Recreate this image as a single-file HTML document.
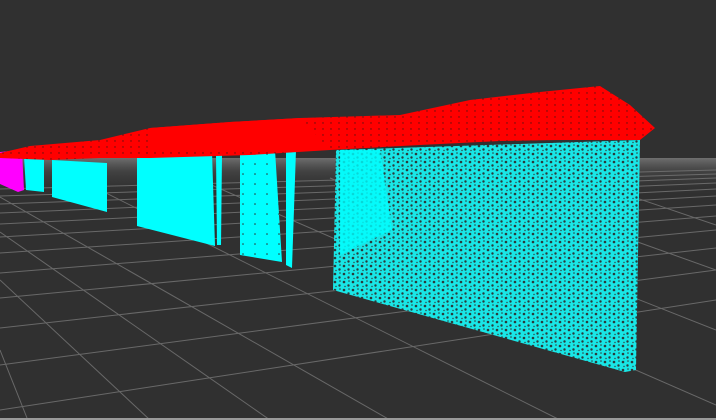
<!DOCTYPE html>
<html><head><style>html,body{margin:0;padding:0;background:#303030;overflow:hidden}svg{display:block}</style></head>
<body>
<svg width="716" height="420" viewBox="0 0 716 420" xmlns="http://www.w3.org/2000/svg">
<defs>
<linearGradient id="haze" x1="0" y1="0" x2="0" y2="1">
<stop offset="0" stop-color="#8a8a8a" stop-opacity="0.7"/>
<stop offset="0.35" stop-color="#606060" stop-opacity="0.35"/>
<stop offset="1" stop-color="#303030" stop-opacity="0"/>
</linearGradient>
<pattern id="spk" width="9" height="8" patternUnits="userSpaceOnUse">
<rect width="9" height="8" fill="#19e6e6"/>
<circle cx="2" cy="2" r="1.3" fill="#2b3a3a"/>
<circle cx="6.5" cy="5.5" r="1.2" fill="#2b3a3a"/>
<circle cx="7" cy="1" r="0.8" fill="#30403f"/>
<circle cx="3" cy="6.5" r="0.7" fill="#30403f"/>
</pattern>
<pattern id="spk2" width="12" height="10" patternUnits="userSpaceOnUse">
<rect width="12" height="10" fill="#00ffff"/>
<circle cx="3" cy="4" r="0.8" fill="#2b3a3a"/>
</pattern>
<pattern id="rd" width="8" height="6" patternUnits="userSpaceOnUse">
<rect width="8" height="6" fill="#ff0000"/>
<circle cx="3" cy="3" r="0.7" fill="#5a1010"/>
</pattern>
</defs>
<rect width="716" height="420" fill="#303030"/>
<rect x="0" y="158" width="716" height="40" fill="url(#haze)"/>
<g stroke="#777" stroke-width="1" fill="none" opacity="0.8">
<line x1="0" y1="197" x2="390" y2="420"/>
<line x1="0" y1="232" x2="270" y2="420"/>
<line x1="0" y1="280" x2="150" y2="420"/>
<line x1="0" y1="350" x2="27" y2="418"/>
<line x1="80" y1="180" x2="560" y2="420"/>
<line x1="200" y1="180" x2="716" y2="405"/>
<line x1="330" y1="178" x2="716" y2="330"/>
<line x1="450" y1="175" x2="716" y2="270"/>
<line x1="560" y1="172" x2="716" y2="225"/>
<line x1="0" y1="410" x2="716" y2="300"/>
<line x1="0" y1="365" x2="716" y2="270"/>
<line x1="0" y1="328" x2="716" y2="248"/>
<line x1="0" y1="298" x2="716" y2="230"/>
<line x1="0" y1="273" x2="716" y2="216"/>
<line x1="0" y1="253" x2="716" y2="205"/>
<line x1="0" y1="237" x2="716" y2="196"/>
<line x1="0" y1="224" x2="716" y2="189"/>
<line x1="0" y1="213" x2="716" y2="183"/>
<line x1="0" y1="204" x2="716" y2="178"/>
<line x1="0" y1="196" x2="716" y2="174"/>
<line x1="0" y1="189" x2="716" y2="170"/>
</g>
<rect x="0" y="418" width="716" height="2" fill="#9a9a9a"/>
<polygon points="0,152 22,150 24,190 18,192 0,184" fill="#ff00ff"/>
<polygon points="24,156 44,158 44,192 26,190" fill="#00ffff"/>
<polygon points="52,160 107,163 107,212 52,197" fill="#00ffff"/>
<polygon points="137,152 212,152 215,246 137,226" fill="#00ffff"/>
<polygon points="216,155 222,155 221,245 217,245" fill="#00ffff"/>
<polygon points="240,152 275,150 282,262 240,255" fill="url(#spk2)"/>
<polygon points="286,150 296,150 292,268 286,265" fill="#00ffff"/>
<polygon points="336,150 640,140 636,370 625,372 333,290" fill="url(#spk)"/>
<polygon points="340,150 380,150 392,230 360,245 340,255" fill="#00ffff" opacity="0.8"/>
<polygon points="0,153 30,146 100,140 150,128 230,122 300,118 400,115 470,100 540,92 600,86 630,105 655,128 640,140 560,140 500,141 420,145 330,150 250,155 150,158 100,158 50,160 0,158" fill="url(#rd)"/>
<polygon points="150,128 230,122 300,118 330,150 250,150 150,150" fill="#ff0000"/>
</svg>
</body></html>
